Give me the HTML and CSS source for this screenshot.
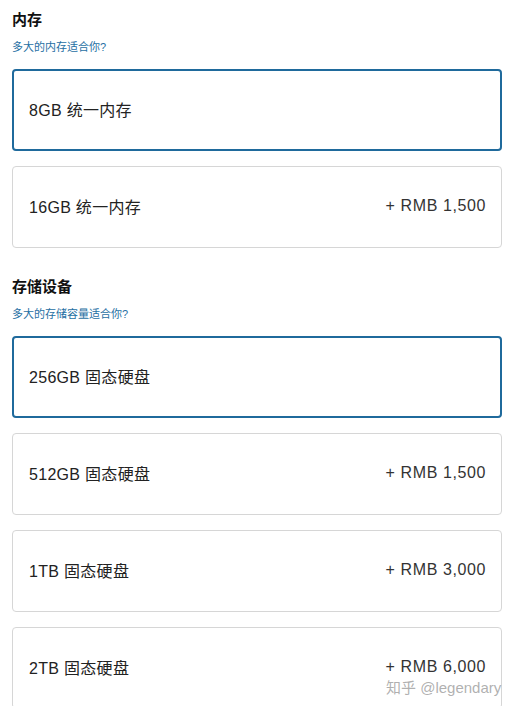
FILE: index.html
```html
<html><head>
	<meta charset="UTF-8">
	<link rel="stylesheet" href="styles.css">
</head>

<body>
	<div class="page">
		<div class="section">
			<div class="title">内存</div>
			<div class="help">多大的内存适合你?</div>
			<div class="options">
				<div class="option selected"><span>8GB 统一内存</span></div>
				<div class="option"><span>16GB 统一内存</span><span class="price">+ RMB 1,500</span></div>
			</div>
		</div>
		<div class="section">
			<div class="title">存储设备</div>
			<div class="help">多大的存储容量适合你?</div>
			<div class="options">
				<div class="option selected"><span>256GB 固态硬盘</span></div>
				<div class="option"><span>512GB 固态硬盘</span><span class="price">+ RMB 1,500</span></div>
				<div class="option"><span>1TB 固态硬盘</span><span class="price">+ RMB 3,000</span></div>
				<div class="option"><span>2TB 固态硬盘</span><span class="price">+ RMB 6,000</span></div>
			</div>
		</div>
	</div>
	<div class="watermark">知乎 @legendary</div>
</body></html>
```

FILE: styles.css
```css
* {
	box-sizing: border-box;
	font-family: 'Liberation Sans', 'Noto Sans CJK SC', sans-serif;
}
body {
	margin: 0;
	background-color: #fff;
	color: #222;
	overflow: hidden;
}
.page {
	width: 490px;
	margin-left: 12px;
	padding-top: 10px;
	display: flex;
	flex-direction: column;
	gap: 29px;
}
.title {
	font-size: 15px;
	line-height: 20px;
	font-weight: bold;
	color: #111;
}
.help {
	margin-top: 9px;
	font-size: 11px;
	line-height: 16px;
	color: #1f6fa3;
}
.options {
	margin-top: 14px;
	display: flex;
	flex-direction: column;
	gap: 15px;
}
.option {
	height: 82px;
	border: 1px solid #d6d6d6;
	border-radius: 4px;
	padding: 0 15px 3px 16px;
	display: flex;
	align-items: center;
	justify-content: space-between;
	font-size: 16px;
	letter-spacing: 0.3px;
	color: #222;
}
.option.selected {
	border: 2px solid #1f6a9c;
	padding-left: 15px;
}
.price {
	color: #333;
	letter-spacing: 0.6px;
}
.watermark {
	position: absolute;
	left: 386px;
	top: 676px;
	font-size: 15px;
	color: rgba(150, 150, 150, 0.75);
}
```
